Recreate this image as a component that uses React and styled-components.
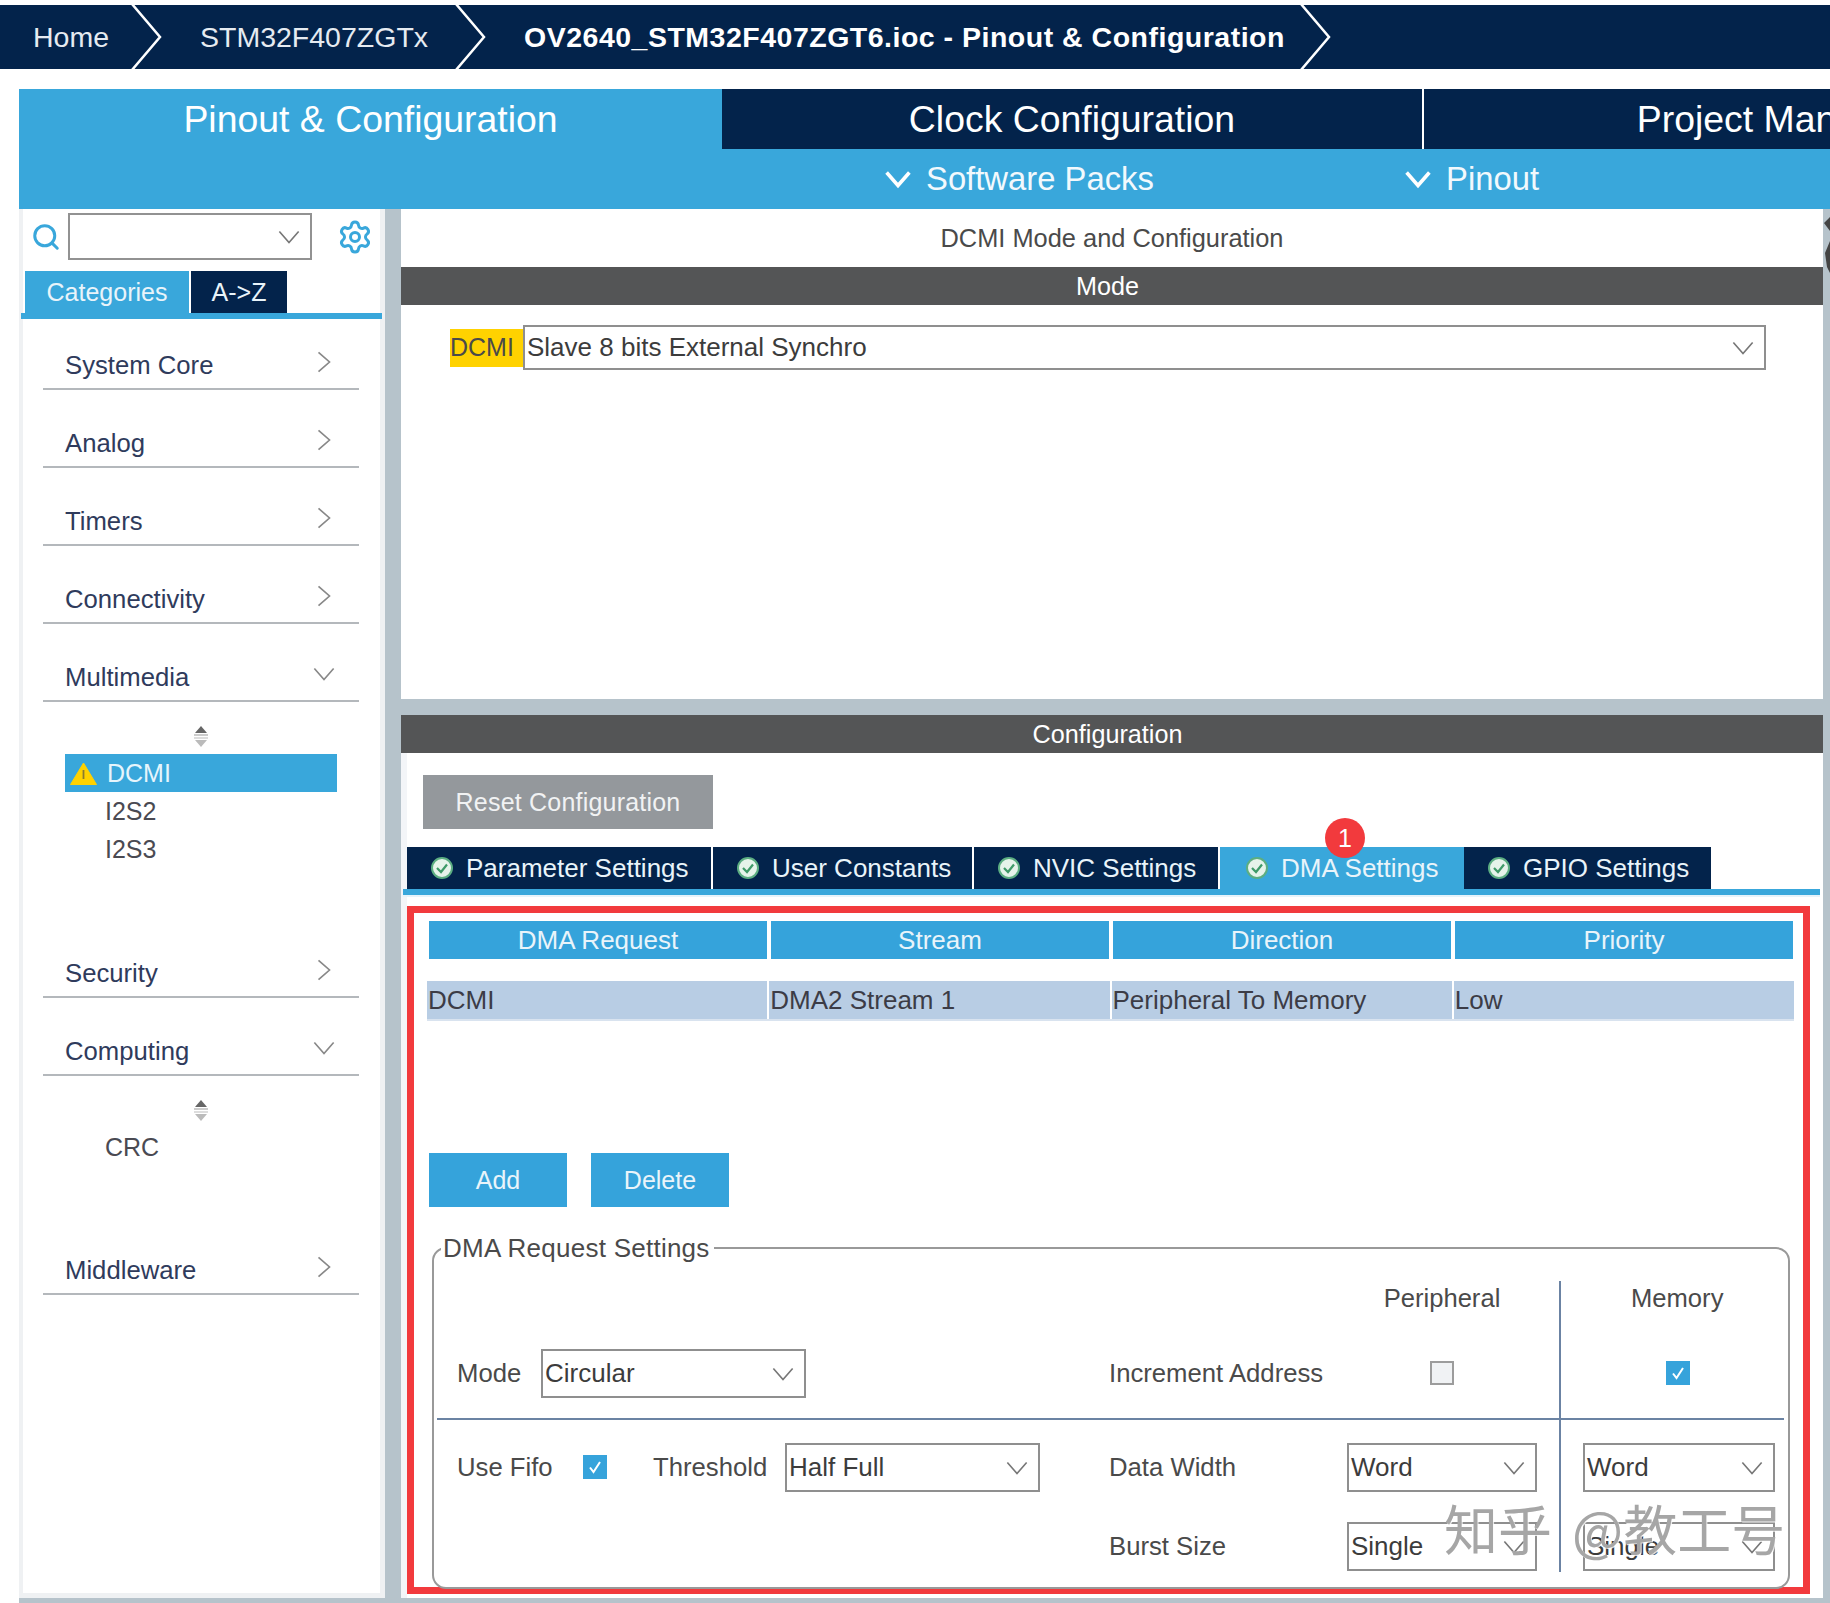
import React from 'react';
import styled, { createGlobalStyle } from 'styled-components';
import { Search, Settings } from 'lucide-react';

const NAVY = '#03234b';
const BLUE = '#39a7db';
const DARK = '#545556';
const GUTTER = '#b6c3cb';
const LINE = '#6b83a3';

const GlobalStyle = createGlobalStyle`
  html, body {
    margin: 0;
    padding: 0;
    background: #fff;
  }
  * {
    box-sizing: border-box;
  }
`;

const Page = styled.div`
  position: relative;
  width: 1830px;
  height: 1603px;
  padding-top: 5px;
  overflow: hidden;
  background: #fff;
  font-family: 'Liberation Sans', Arial, sans-serif;
  font-size: 26px;
  color: #444;
`;

const Breadcrumb = styled.div`
  display: flex;
  height: 64px;
  background: ${NAVY};
  color: #e6ebf1;
  font-size: 28.5px;
`;

const Crumb = styled.div`
  display: flex;
  align-items: center;
  flex: none;
  width: ${(p) => p.$w}px;
  padding-left: ${(p) => p.$pad}px;
  white-space: nowrap;
  font-weight: ${(p) => (p.$bold ? 700 : 400)};
  letter-spacing: ${(p) => (p.$bold ? '0.5px' : '0')};
  color: ${(p) => (p.$bold ? '#fff' : 'inherit')};
`;

const SeparatorSvg = styled.svg`
  flex: none;
`;

const PerspectiveBlock = styled.div`
  height: 120px;
  margin: 20px 0 0 19px;
  background: ${BLUE};
  overflow: hidden;
`;

const PerspectiveTabs = styled.div`
  display: flex;
  height: 60px;
`;

const PerspectiveTab = styled.div`
  display: flex;
  align-items: center;
  justify-content: center;
  flex: none;
  width: ${(p) => p.$w}px;
  background: ${(p) => (p.$active ? BLUE : NAVY)};
  border-right: ${(p) => (p.$active ? 'none' : '2px solid #fff')};
  color: #fff;
  font-size: 37.4px;
  white-space: nowrap;
`;

const SubMenu = styled.div`
  display: flex;
  align-items: center;
  height: 60px;
  padding-left: 866px;
  color: #f2f9fd;
  font-size: 32.8px;
`;

const SubMenuItem = styled.div`
  display: flex;
  align-items: center;
  gap: 15px;
  flex: none;
  width: 520px;
`;

const Body = styled.div`
  position: relative;
  display: flex;
  gap: 16px;
  height: 1394px;
  margin-left: 19px;
  background: ${GUTTER};
`;

const Sidebar = styled.aside`
  flex: none;
  width: 366px;
  height: 1389px;
  background: #fff;
  border-left: 4px solid #eff1f3;
  border-right: 5px solid #eff1f3;
  border-bottom: 5px solid #eff1f3;
`;

const SearchRow = styled.div`
  display: flex;
  align-items: center;
  height: 47px;
  margin-top: 4px;
  padding-left: 8px;
  color: ${BLUE};
`;

const SearchBox = styled.div`
  display: flex;
  align-items: center;
  justify-content: flex-end;
  flex: none;
  width: 244px;
  height: 47px;
  margin: 0 25px 0 7px;
  padding-right: 10px;
  border: 2px solid #929292;
`;

const ViewTabs = styled.div`
  display: flex;
  height: 48px;
  margin: 11px -2px 0 -2px;
  padding-left: 4px;
  border-bottom: 6px solid ${BLUE};
`;

const ViewTab = styled.div`
  display: flex;
  align-items: center;
  justify-content: center;
  width: ${(p) => p.$w}px;
  margin-right: 2px;
  background: ${(p) => (p.$active ? BLUE : NAVY)};
  color: #e9f4fa;
  font-size: 25px;
`;

const Nav = styled.nav`
  padding: 0 21px 0 20px;
`;

const Category = styled.div`
  display: flex;
  align-items: center;
  justify-content: space-between;
  height: 78px;
  padding: 30px 24px 0 22px;
  border-bottom: 2px solid #b4b8bc;
  color: #2f3b5c;
  font-size: 25.7px;

  &:first-child {
    height: 71px;
    padding-top: 23px;
  }

  svg {
    margin-top: -6px;
  }
`;

const SubList = styled.div`
  height: ${(p) => p.$h}px;
  padding: 24px 0 0 22px;
`;

const Sorter = styled.div`
  display: flex;
  justify-content: center;
  width: 272px;
  height: 21px;
  margin-bottom: 7px;
`;

const SubRow = styled.div`
  display: flex;
  align-items: center;
  width: 272px;
  height: 38px;
  background: ${(p) => (p.$active ? BLUE : 'transparent')};
  color: ${(p) => (p.$active ? '#e6f5fc' : '#4a4a52')};
  font-size: 25px;
`;

const IconSlot = styled.span`
  display: flex;
  align-items: center;
  flex: none;
  width: ${(p) => (p.$wide ? 42 : 40)}px;
  padding-left: 5px;
`;

const Main = styled.main`
  display: flex;
  flex-direction: column;
  gap: 16px;
  flex: none;
  width: 1422px;
  height: 1389px;
`;

const ModePanel = styled.section`
  flex: none;
  height: 490px;
  background: #fff;
`;

const PanelTitle = styled.div`
  display: flex;
  align-items: center;
  justify-content: center;
  height: 58px;
  color: #4a4a4a;
  font-size: 25.4px;
`;

const DarkBar = styled.div`
  display: flex;
  align-items: center;
  justify-content: center;
  height: 38px;
  padding-right: 9px;
  background: ${DARK};
  color: #fff;
  font-size: 25.2px;
`;

const ModeRow = styled.div`
  display: flex;
  align-items: center;
  margin-top: 20px;
  padding-left: 49px;
`;

const ModeBadge = styled.span`
  display: flex;
  align-items: center;
  width: 73px;
  height: 38px;
  background: #ffd200;
  color: #4a4a4a;
  font-size: 25px;
`;

const Select = styled.div`
  display: flex;
  align-items: center;
  justify-content: space-between;
  flex: none;
  width: ${(p) => p.$w}px;
  height: ${(p) => p.$h || 49}px;
  padding: 0 10px 0 2px;
  border: 2px solid #8f8f8f;
  background: #fff;
  color: #3c3c3c;
`;

const ConfigPanel = styled.section`
  position: relative;
  flex: 1;
  background: #fff;
  border-left: 6px solid #f3f5f8;
`;

const ConfigBar = styled(DarkBar)`
  margin-left: -6px;
`;

const ResetButton = styled.div`
  display: flex;
  align-items: center;
  justify-content: center;
  width: 290px;
  height: 54px;
  margin: 22px 0 0 16px;
  background: #94989c;
  color: #f1f2f3;
  font-size: 25px;
  letter-spacing: 0.2px;
`;

const ConfigTabs = styled.div`
  display: flex;
  height: 48px;
  margin: 18px 3px 0 -4px;
  padding-left: 4px;
  border-bottom: 6px solid ${BLUE};
  box-shadow: 0 2px 0 #e6f3fa;
`;

const ConfigTab = styled.div`
  position: relative;
  display: flex;
  align-items: center;
  gap: 13px;
  flex: none;
  width: ${(p) => p.$w}px;
  padding-left: ${(p) => (p.$active ? 26 : 24)}px;
  background: ${(p) => (p.$active ? BLUE : NAVY)};
  border-right: 2px solid ${(p) => (p.$active ? BLUE : '#fff')};
  color: #e9f4fa;
  white-space: nowrap;
`;

const StatusSvg = styled.svg`
  flex: none;
`;

const Badge = styled.span`
  position: absolute;
  left: 105px;
  top: -29px;
  display: flex;
  align-items: center;
  justify-content: center;
  width: 40px;
  height: 40px;
  border-radius: 50%;
  background: #f23a3d;
  color: #fff;
  font-size: 25px;
`;

const RedBox = styled.div`
  width: 1403px;
  height: 688px;
  margin-top: 11px;
  padding: 8px 0 0 15px;
  border: 7px solid #f23a3d;
`;

const TableHead = styled.div`
  display: grid;
  grid-template-columns: repeat(4, 338px);
  gap: 4px;
`;

const HeadCell = styled.div`
  display: flex;
  align-items: center;
  justify-content: center;
  height: 38px;
  background: #35a3db;
  color: #e9f4fa;
`;

const TableRow = styled.div`
  display: grid;
  grid-template-columns: repeat(4, 1fr);
  gap: 2px;
  width: 1367px;
  margin: 22px 0 0 -2px;
  border-bottom: 2px solid #d9e3ef;
`;

const RowCell = styled.div`
  display: flex;
  align-items: center;
  height: 38px;
  padding-left: 1px;
  background: #b8cde4;
  color: #3c3c46;
`;

const ActionRow = styled.div`
  display: flex;
  gap: 24px;
  margin-top: 132px;
`;

const ActionButton = styled.div`
  display: flex;
  align-items: center;
  justify-content: center;
  width: 138px;
  height: 54px;
  background: #35a3db;
  color: #e9f4fa;
  font-size: 25px;
`;

const SettingsGroup = styled.fieldset`
  width: 1358px;
  height: 356px;
  margin: 26px 0 0 3px;
  padding: 0;
  border: 2px solid #999;
  border-radius: 14px;
`;

const GroupTitle = styled.legend`
  margin-left: 7px;
  padding: 0 4px 0 2px;
  line-height: 30px;
  letter-spacing: 0.25px;
  color: #4a4a4a;
`;

const SettingsGrid = styled.div`
  display: grid;
  grid-template-columns: 675px 238px 214px 227px;
  grid-template-rows: 36px 101px 2px 102px 50px;
  margin-top: 18px;
`;

const Cell = styled.div`
  display: flex;
  align-items: flex-start;
  justify-content: ${(p) => (p.$center ? 'center' : 'flex-start')};
  padding-top: ${(p) => p.$top || 0}px;
  padding-left: ${(p) => p.$left || 0}px;
  padding-right: ${(p) => p.$right || 0}px;
  border-right: ${(p) => (p.$divider ? `2px solid ${LINE}` : 'none')};
  white-space: nowrap;
`;

const Rule = styled.div`
  grid-column: 1 / -1;
  margin: 0 4px 0 3px;
  background: ${LINE};
`;

const ColumnTitle = styled.span`
  margin-top: 3px;
  color: #4a4a4a;
  font-size: 25.6px;
`;

const FieldLabel = styled.span`
  display: flex;
  align-items: center;
  flex: none;
  width: ${(p) => (p.$w ? `${p.$w}px` : 'auto')};
  height: 49px;
  margin-left: ${(p) => p.$offset || 0}px;
  color: #4a4a4a;
  font-size: 25.7px;
`;

const CheckWrap = styled.span`
  display: flex;
  align-items: center;
  justify-content: center;
  flex: none;
  width: 24px;
  height: 24px;
  margin-top: 12px;
  background: ${(p) => (p.$on ? '#36a3db' : '#f0f2f4')};
  border: ${(p) => (p.$on ? 'none' : '2px solid #9c9c9c')};
`;

const Watermark = styled.div`
  position: absolute;
  left: 1444px;
  top: 1490px;
  color: #a6a6a6;
  font-family: 'Noto Sans CJK SC', sans-serif;
  font-size: 54px;
  line-height: 76px;
  word-spacing: 8px;
  white-space: nowrap;
  text-shadow: 1px 1px 0 rgba(255, 255, 255, 0.8);
`;

const ScrollMark = styled.svg`
  position: absolute;
  right: 0;
  top: 8px;
`;

const Chevron = ({ dir = 'down', size = 22, color = '#777', width = 1.2 }) => (
  <svg width={size} height={size} viewBox="0 0 16 16" fill="none">
    <polyline
      points={dir === 'down' ? '1,4 8,12 15,4' : '4,1 12,8 4,15'}
      stroke={color}
      strokeWidth={width}
    />
  </svg>
);

const CrumbSeparator = () => (
  <SeparatorSvg width="33" height="64" viewBox="0 0 33 64" fill="none">
    <polyline points="1,-1 29,32 1,65" stroke="#fff" strokeWidth="2.5" />
  </SeparatorSvg>
);

const Warning = () => (
  <svg width="27" height="23" viewBox="0 0 27 23">
    <path d="M13.5 1 L26.5 22.5 H0.5 Z" fill="#ffd200" stroke="#ffd200" strokeLinejoin="round" />
    <rect x="12.6" y="8" width="1.8" height="9" fill="#8a7a30" />
  </svg>
);

const SortArrows = () => (
  <svg width="16" height="21" viewBox="0 0 16 21">
    <path d="M8 0 L14 7 H2 Z" fill="#666" />
    <rect x="1" y="8" width="14" height="2" fill="#ccc" />
    <rect x="1" y="11" width="14" height="2" fill="#ddd" />
    <path d="M8 21 L14 14 H2 Z" fill="#bbb" />
  </svg>
);

const StatusIcon = () => (
  <StatusSvg width="22" height="22" viewBox="0 0 22 22">
    <circle cx="11" cy="11" r="10" fill="#e6f3ea" stroke="#5cae82" strokeWidth="2" />
    <polyline points="6,11 10,15 16,7.5" fill="none" stroke="#3f9a68" strokeWidth="2.2" />
  </StatusSvg>
);

const Check = ({ on }) => (
  <CheckWrap $on={on}>
    {on && (
      <svg width="16" height="16" viewBox="0 0 16 16" fill="none">
        <polyline points="3,8.5 6.5,13 13,3" stroke="#fff" strokeWidth="2" />
      </svg>
    )}
  </CheckWrap>
);

const Dropdown = ({ w, h, value }) => (
  <Select $w={w} $h={h}>
    <span>{value}</span>
    <Chevron />
  </Select>
);

const configTabs = [
  { label: 'Parameter Settings', w: 306 },
  { label: 'User Constants', w: 261 },
  { label: 'NVIC Settings', w: 246 },
  { label: 'DMA Settings', w: 244, active: true },
  { label: 'GPIO Settings', w: 249 },
];

const App = () => (
  <Page>
    <GlobalStyle />
    <Breadcrumb>
      <Crumb $w={131} $pad={33}>Home</Crumb>
      <CrumbSeparator />
      <Crumb $w={291} $pad={36}>STM32F407ZGTx</Crumb>
      <CrumbSeparator />
      <Crumb $w={812} $pad={36} $bold>OV2640_STM32F407ZGT6.ioc - Pinout &amp; Configuration</Crumb>
      <CrumbSeparator />
    </Breadcrumb>

    <PerspectiveBlock>
      <PerspectiveTabs>
        <PerspectiveTab $w={703} $active>Pinout &amp; Configuration</PerspectiveTab>
        <PerspectiveTab $w={702}>Clock Configuration</PerspectiveTab>
        <PerspectiveTab $w={702}>Project Manager</PerspectiveTab>
      </PerspectiveTabs>
      <SubMenu>
        <SubMenuItem>
          <Chevron size={26} color="#fff" width={2.2} />
          Software Packs
        </SubMenuItem>
        <SubMenuItem>
          <Chevron size={26} color="#fff" width={2.2} />
          Pinout
        </SubMenuItem>
      </SubMenu>
    </PerspectiveBlock>

    <Body>
      <Sidebar>
        <SearchRow>
          <Search size={30} strokeWidth={2.4} />
          <SearchBox>
            <Chevron />
          </SearchBox>
          <Settings size={36} strokeWidth={2} />
        </SearchRow>
        <ViewTabs>
          <ViewTab $w={164} $active>Categories</ViewTab>
          <ViewTab $w={96}>A-&gt;Z</ViewTab>
        </ViewTabs>
        <Nav>
          <Category>System Core<Chevron dir="right" color="#888" /></Category>
          <Category>Analog<Chevron dir="right" color="#888" /></Category>
          <Category>Timers<Chevron dir="right" color="#888" /></Category>
          <Category>Connectivity<Chevron dir="right" color="#888" /></Category>
          <Category>Multimedia<Chevron color="#888" /></Category>
          <SubList $h={218}>
            <Sorter><SortArrows /></Sorter>
            <SubRow $active><IconSlot $wide><Warning /></IconSlot>DCMI</SubRow>
            <SubRow><IconSlot />I2S2</SubRow>
            <SubRow><IconSlot />I2S3</SubRow>
          </SubList>
          <Category>Security<Chevron dir="right" color="#888" /></Category>
          <Category>Computing<Chevron color="#888" /></Category>
          <SubList $h={141}>
            <Sorter><SortArrows /></Sorter>
            <SubRow><IconSlot />CRC</SubRow>
          </SubList>
          <Category>Middleware<Chevron dir="right" color="#888" /></Category>
        </Nav>
      </Sidebar>

      <Main>
        <ModePanel>
          <PanelTitle>DCMI Mode and Configuration</PanelTitle>
          <DarkBar>Mode</DarkBar>
          <ModeRow>
            <ModeBadge>DCMI</ModeBadge>
            <Dropdown w={1243} h={45} value="Slave 8 bits External Synchro" />
          </ModeRow>
        </ModePanel>

        <ConfigPanel>
          <ConfigBar>Configuration</ConfigBar>
          <ResetButton>Reset Configuration</ResetButton>
          <ConfigTabs>
            {configTabs.map((tab) => (
              <ConfigTab key={tab.label} $w={tab.w} $active={tab.active}>
                <StatusIcon />
                {tab.label}
                {tab.active && <Badge>1</Badge>}
              </ConfigTab>
            ))}
          </ConfigTabs>
          <RedBox>
            <TableHead>
              <HeadCell>DMA Request</HeadCell>
              <HeadCell>Stream</HeadCell>
              <HeadCell>Direction</HeadCell>
              <HeadCell>Priority</HeadCell>
            </TableHead>
            <TableRow>
              <RowCell>DCMI</RowCell>
              <RowCell>DMA2 Stream 1</RowCell>
              <RowCell>Peripheral To Memory</RowCell>
              <RowCell>Low</RowCell>
            </TableRow>
            <ActionRow>
              <ActionButton>Add</ActionButton>
              <ActionButton>Delete</ActionButton>
            </ActionRow>
            <SettingsGroup>
              <GroupTitle>DMA Request Settings</GroupTitle>
              <SettingsGrid>
                <Cell />
                <Cell />
                <Cell $center $divider $right={22}><ColumnTitle>Peripheral</ColumnTitle></Cell>
                <Cell $left={70}><ColumnTitle>Memory</ColumnTitle></Cell>

                <Cell $top={32} $left={23}>
                  <FieldLabel $w={84}>Mode</FieldLabel>
                  <Dropdown w={265} value="Circular" />
                </Cell>
                <Cell $top={32}><FieldLabel>Increment Address</FieldLabel></Cell>
                <Cell $top={32} $center $divider $right={22}><Check /></Cell>
                <Cell $top={32} $left={105}><Check on /></Cell>

                <Rule />

                <Cell $top={23} $left={23}>
                  <FieldLabel $w={126}>Use Fifo</FieldLabel>
                  <Check on />
                  <FieldLabel $w={132} $offset={46}>Threshold</FieldLabel>
                  <Dropdown w={255} value="Half Full" />
                </Cell>
                <Cell $top={23}><FieldLabel>Data Width</FieldLabel></Cell>
                <Cell $top={23} $divider><Dropdown w={190} value="Word" /></Cell>
                <Cell $top={23} $left={22}><Dropdown w={192} value="Word" /></Cell>

                <Cell />
                <Cell><FieldLabel>Burst Size</FieldLabel></Cell>
                <Cell $divider><Dropdown w={190} value="Single" /></Cell>
                <Cell $left={22}><Dropdown w={192} value="Single" /></Cell>
              </SettingsGrid>
            </SettingsGroup>
          </RedBox>
        </ConfigPanel>
      </Main>
      <ScrollMark width="7" height="56" viewBox="0 0 7 56">
        <path d="M7 0 L1 6 L7 14 Z M7 24 L2 36 L4 50 L7 56 Z" fill="#444" />
      </ScrollMark>
    </Body>
    <Watermark>知乎 @教工号</Watermark>
  </Page>
);

export default App;
